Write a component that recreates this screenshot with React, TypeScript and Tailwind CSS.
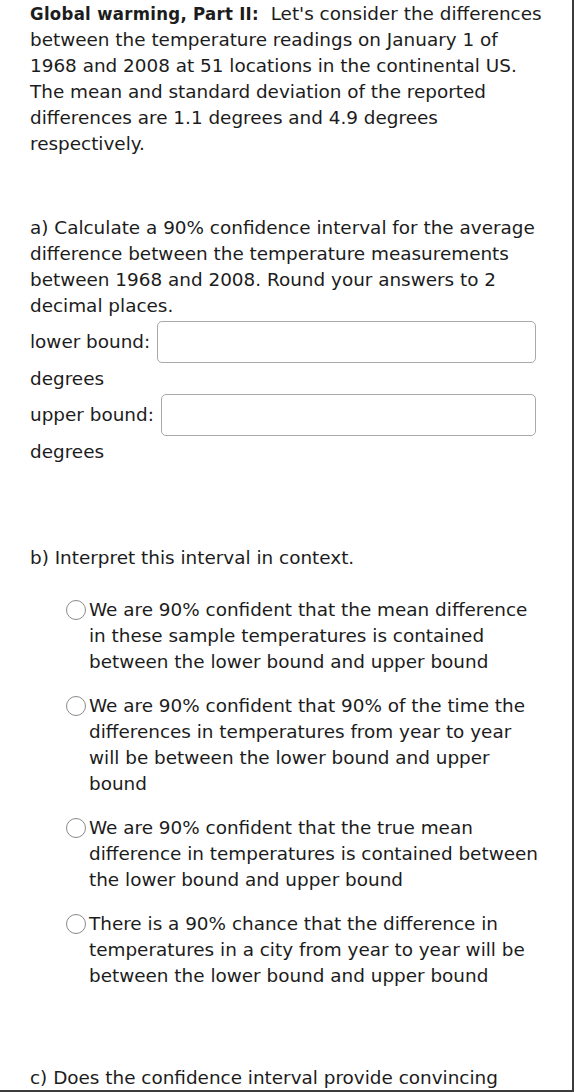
import React from "react";

const options = [
  "We are 90% confident that the mean difference in these sample temperatures is contained between the lower bound and upper bound",
  "We are 90% confident that 90% of the time the differences in temperatures from year to year will be between the lower bound and upper bound",
  "We are 90% confident that the true mean difference in temperatures is contained between the lower bound and upper bound",
  "There is a 90% chance that the difference in temperatures in a city from year to year will be between the lower bound and upper bound",
];

function BoundRow({ label }: { label: string }) {
  return (
    <>
      <div className="flex items-center gap-[7px]">
        <span>{label}</span>
        <input
          type="text"
          className="h-[42px] flex-1 rounded-[5px] border-[1.5px] border-[#a9a9a9] bg-white outline-none"
        />
      </div>
      <div className="mt-[3px]">degrees</div>
    </>
  );
}

export default function App() {
  return (
    <div className="h-[1092px] w-[574px] overflow-hidden border-r-2 border-b-2 border-[#3c3c3c] bg-white">
      <div className="pl-[30px] pr-[26px] pt-px text-[18.4px] leading-[26px] text-[#1c1c1c] [font-family:'DejaVu_Sans','Open_Sans',sans-serif]">
        <p>
          <b className="tracking-[0.3px] [font-family:'DejaVu_Sans_Condensed','DejaVu_Sans',sans-serif]">Global warming, Part II:</b>&nbsp; Let's consider the differences between the temperature
          readings on January 1 of 1968 and 2008 at 51 locations in the continental US. The mean and
          standard deviation of the reported differences are 1.1 degrees and 4.9 degrees respectively.
        </p>

        <p className="mt-[58px]">
          a) Calculate a 90% confidence interval for the average difference between the temperature
          measurements between 1968 and 2008. Round your answers to 2 decimal places.
        </p>

        <div className="mt-[2px] pr-[10px]">
          <BoundRow label="lower bound:" />
          <div className="mt-[2px]">
            <BoundRow label="upper bound:" />
          </div>
        </div>

        <p className="mt-[80px]">b) Interpret this interval in context.</p>

        <div className="mt-[26px] flex flex-col gap-[18px] pl-[36px]">
          {options.map((o) => (
            <label key={o} className="flex items-start gap-[3px]">
              <span className="mt-[3px] h-[20px] w-[20px] shrink-0 rounded-full border-[1.5px] border-[#8a8a8a] bg-white" />
              <span>{o}</span>
            </label>
          ))}
        </div>

        <p className="mt-[76px]">c) Does the confidence interval provide convincing evidence that the temperatures differ?</p>
      </div>
    </div>
  );
}
